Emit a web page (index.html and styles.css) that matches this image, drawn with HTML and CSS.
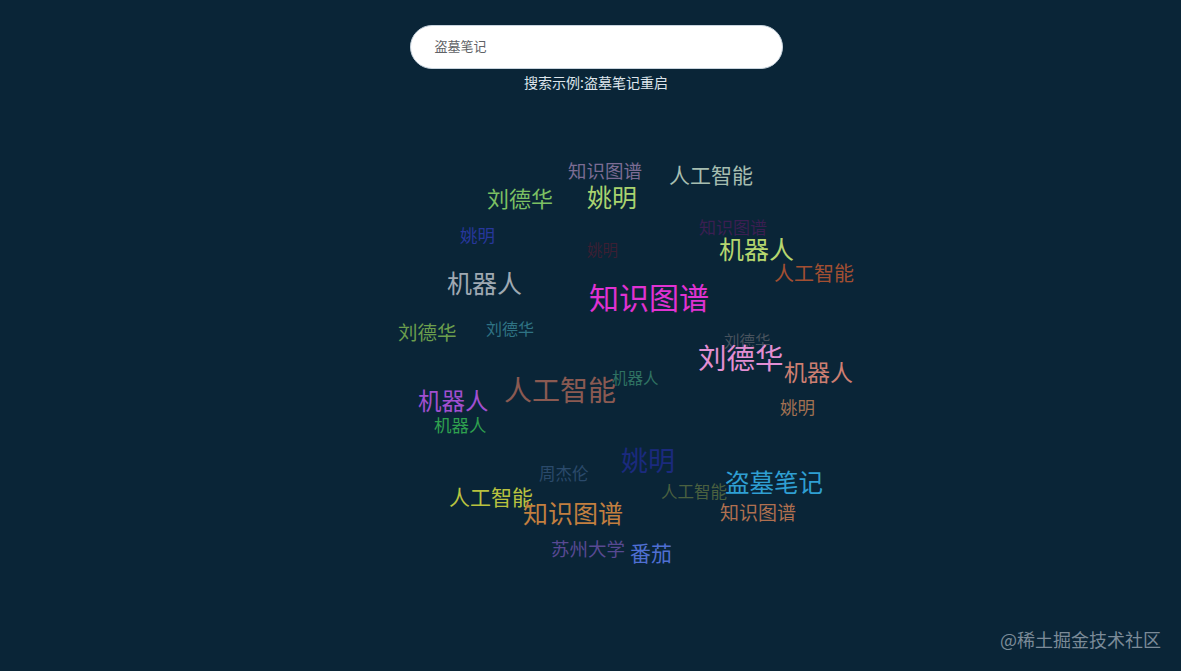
FILE: index.html
```html
<!DOCTYPE html>
<html lang="zh">
<head>
<meta charset="utf-8">
<title>词云搜索</title>
<link rel="stylesheet" href="styles.css">
</head>
<body>
<header class="search">
  <div class="search-box">盗墓笔记</div>
  <p class="hint">搜索示例:盗墓笔记重启</p>
</header>
<section class="cloud">
  <span class="w" style="left:568px;top:161px;font-size:18.5px;color:#7b6c93">知识图谱</span>
  <span class="w" style="left:669px;top:164px;font-size:21px;color:#a6bdb0">人工智能</span>
  <span class="w" style="left:487px;top:186px;font-size:22px;color:#7cc063">刘德华</span>
  <span class="w" style="left:587px;top:184px;font-size:25px;color:#a9d36f">姚明</span>
  <span class="w" style="left:460px;top:226px;font-size:17.5px;color:#27379c">姚明</span>
  <span class="w" style="left:699px;top:218px;font-size:17px;color:#3a1f52">知识图谱</span>
  <span class="w" style="left:587px;top:242px;font-size:15.5px;color:#3b1f33">姚明</span>
  <span class="w" style="left:719px;top:236px;font-size:25px;color:#b6d66f">机器人</span>
  <span class="w" style="left:774px;top:263px;font-size:20px;color:#a24f32">人工智能</span>
  <span class="w" style="left:447px;top:270px;font-size:25px;color:#9fa9b2">机器人</span>
  <span class="w" style="left:589px;top:281px;font-size:30px;color:#e032d2">知识图谱</span>
  <span class="w" style="left:398px;top:322px;font-size:19.5px;color:#6c9e4d">刘德华</span>
  <span class="w" style="left:486px;top:320px;font-size:16px;color:#2f7384">刘德华</span>
  <span class="w" style="left:724px;top:333px;font-size:15.5px;color:#47525d">刘德华</span>
  <span class="w" style="left:698px;top:343px;font-size:28.5px;color:#e38fd3">刘德华</span>
  <span class="w" style="left:784px;top:360px;font-size:23px;color:#cd7f72">机器人</span>
  <span class="w" style="left:504px;top:375px;font-size:28px;color:#8a5a52">人工智能</span>
  <span class="w" style="left:612px;top:370px;font-size:15.5px;color:#2f7262">机器人</span>
  <span class="w" style="left:418px;top:389px;font-size:23.5px;color:#a14fd0">机器人</span>
  <span class="w" style="left:780px;top:398px;font-size:17.5px;color:#a27152">姚明</span>
  <span class="w" style="left:434px;top:416px;font-size:17.5px;color:#2fa04f">机器人</span>
  <span class="w" style="left:621px;top:446px;font-size:27px;color:#1b2a7e">姚明</span>
  <span class="w" style="left:539px;top:465px;font-size:16.5px;color:#2a4a6b">周杰伦</span>
  <span class="w" style="left:449px;top:486px;font-size:21px;color:#b9c23f">人工智能</span>
  <span class="w" style="left:661px;top:483px;font-size:16.5px;color:#4b6140">人工智能</span>
  <span class="w" style="left:725px;top:470px;font-size:24.5px;color:#2f9fd2">盗墓笔记</span>
  <span class="w" style="left:523px;top:500px;font-size:25px;color:#c27f3f">知识图谱</span>
  <span class="w" style="left:720px;top:502px;font-size:19px;color:#b07050">知识图谱</span>
  <span class="w" style="left:551px;top:539px;font-size:18.5px;color:#584992">苏州大学</span>
  <span class="w" style="left:630px;top:542px;font-size:21px;color:#4f6fd2">番茄</span>
</section>
<footer class="mark">@稀土掘金技术社区</footer>
</body>
</html>
```
FILE: styles.css
```css
html, body {
  margin: 0;
  height: 100%;
}
body {
  background: #0a2537;
  font-family: "Noto Sans CJK SC", "Noto Sans", sans-serif;
  overflow: hidden;
  position: relative;
}
.search {
  display: flex;
  flex-direction: column;
  align-items: center;
  padding: 25px 0 0 11px;
}
.search-box {
  box-sizing: border-box;
  width: 373px;
  height: 44px;
  background: #ffffff;
  border: 1px solid #c8d4de;
  border-radius: 22px;
  padding: 0 24px 3px;
  display: flex;
  align-items: center;
  font-size: 13px;
  color: #606266;
}
.hint {
  margin: 4px 0 0;
  font-size: 14px;
  line-height: 18px;
  color: #dde5ec;
}
.cloud {
  position: absolute;
  inset: 0;
  pointer-events: none;
}
.w {
  position: absolute;
  line-height: 1;
  white-space: nowrap;
}
.mark {
  position: absolute;
  right: 20px;
  bottom: 20px;
  font-size: 18px;
  color: #7b8b98;
  line-height: 1.2;
}
```
